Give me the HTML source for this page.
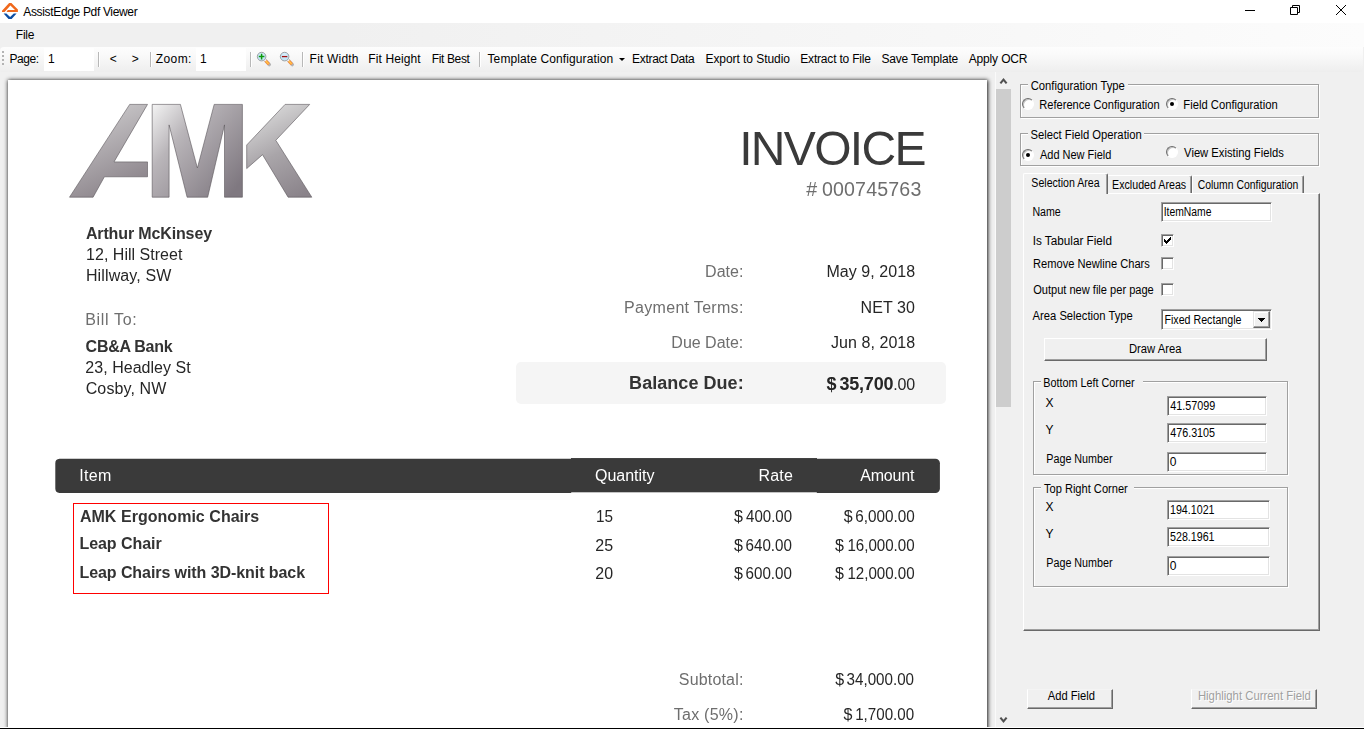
<!DOCTYPE html>
<html>
<head>
<meta charset="utf-8">
<title>AssistEdge Pdf Viewer</title>
<style>
*{box-sizing:border-box;margin:0;padding:0}
html,body{width:1364px;height:729px;overflow:hidden;background:#f0f0f0;font-family:"Liberation Sans",sans-serif;}
.abs{position:absolute;white-space:nowrap}
#win{position:relative;width:1364px;height:729px;overflow:hidden;background:#f0f0f0}
/* ---------- chrome ---------- */
#titlebar{left:0;top:0;width:1364px;height:23px;background:#fff}
#menubar{left:0;top:23px;width:1364px;height:24px;background:linear-gradient(90deg,#f0f0f0 0%,#f0f0f0 25%,#fcfcfc 100%)}
#toolbar{left:0;top:47px;width:1363px;height:25px;background:linear-gradient(180deg,#fdfdfd 0%,#fafafa 30%,#f4f4f4 65%,#eeeeee 100%);border-radius:4px 0 4px 0}
.ui{font-size:12px;line-height:15px;color:#000}
.tb{top:52px}
.sep{width:1px;background:#b8b8b8;top:52px;height:15px}
.tbox{background:#fff;top:48px;height:23px}
/* ---------- pdf page ---------- */
#page{left:8px;top:80px;width:979px;height:660px;background:#fff;box-shadow:0 0 4px 0.5px rgba(0,0,0,.92)}
.inv{color:#262626;font-size:16px;line-height:20px}
.gray{color:#6e6e6e}
/* ---------- right panel ---------- */
.grp{border:1px solid #a0a0a0;box-shadow:1px 1px 0 #fff, inset 1px 1px 0 #fff}
.inp{background:#fff;border:1px solid;border-color:#a0a0a0 #fff #fff #a0a0a0;box-shadow:inset 1px 1px 0 #696969, inset -1px -1px 0 #e3e3e3}
.btn{background:#f0f0f0;border:1px solid;border-color:#fff #696969 #696969 #fff;box-shadow:inset -1px -1px 0 #a0a0a0;font-size:11px;line-height:13px;text-align:center}
.chk{width:13px;height:13px;background:#fff;border:1px solid;border-color:#a0a0a0 #fff #fff #a0a0a0;box-shadow:inset 1px 1px 0 #696969, inset -1px -1px 0 #e3e3e3}
.rad{width:12px;height:12px;border-radius:50%;background:#fff;border:1px solid;border-color:#6c6c6c #fff #fff #6c6c6c;box-shadow:inset 1px 1px 0 rgba(120,120,120,.45)}
.rad.on::after{content:"";position:absolute;left:3px;top:3px;width:4px;height:4px;border-radius:50%;background:#000}
.st{overflow:visible;font-family:"Liberation Sans",sans-serif}
.st text{white-space:pre}
</style>
</head>

<body>
<div id="win">
<div id="titlebar" class="abs"></div>
<svg class="abs" style="left:0;top:0" width="22" height="23" viewBox="0 0 22 23">
  <path d="M2 12 L2 10.7 L9.1 2.9 L11.4 2.9 L17.9 9.6 L17.9 12 L6.5 12 L7.8 10 L15 10 L10.4 5.4 L4.6 12 Z" fill="#f0681c"/>
  <path d="M3.6 13.4 L6.4 13.4 L10.1 16.9 L13.8 13.4 L16.6 13.4 L11.6 19 L8.5 19 Z" fill="#0d4ea3"/>
</svg>
<div id="t1" class="abs ui" style="left:23.31px;top:5px;font-size:12px;line-height:15px;letter-spacing:-0.341px;">AssistEdge Pdf Viewer</div>
<svg class="abs" style="left:1240px;top:0" width="124" height="23" viewBox="0 0 124 23" fill="none" stroke="#000" stroke-width="1">
  <path d="M5 10.5 H15"/>
  <path d="M50.5 7.5 H57.5 V14.5 H50.5 Z"/>
  <path d="M52.5 7.5 V5.5 H59.5 V12.5 H57.5"/>
  <path d="M96 5 L106 15 M106 5 L96 15"/>
</svg>
<div id="menubar" class="abs"></div>
<div id="t2" class="abs ui" style="left:15.75px;top:28px;font-size:12px;line-height:15px;letter-spacing:-0.204px;">File</div>
<div id="toolbar" class="abs"></div>
<div class="abs" style="left:2px;top:51px;width:2px;height:2px;background:#b4b4b4"></div>
<div class="abs" style="left:2px;top:55px;width:2px;height:2px;background:#b4b4b4"></div>
<div class="abs" style="left:2px;top:59px;width:2px;height:2px;background:#b4b4b4"></div>
<div class="abs" style="left:2px;top:63px;width:2px;height:2px;background:#b4b4b4"></div>
<div class="abs tbox" style="left:44px;width:50px"></div>
<div class="abs tbox" style="left:196px;width:50px"></div>
<div id="t3" class="abs ui" style="left:47.90px;top:52px;font-size:12px;line-height:15px;">1</div>
<div id="t4" class="abs ui" style="left:199.90px;top:52px;font-size:12px;line-height:15px;">1</div>
<div class="abs sep" style="left:98px"></div><div class="abs sep" style="left:99px;background:#fff"></div>
<div class="abs sep" style="left:150px"></div><div class="abs sep" style="left:151px;background:#fff"></div>
<div class="abs sep" style="left:250px"></div><div class="abs sep" style="left:251px;background:#fff"></div>
<div class="abs sep" style="left:302px"></div><div class="abs sep" style="left:303px;background:#fff"></div>
<div class="abs sep" style="left:479px"></div><div class="abs sep" style="left:480px;background:#fff"></div>
<div id="t5" class="abs ui" style="left:109.63px;top:52px;font-size:12px;line-height:15px;">&lt;</div>
<div id="t6" class="abs ui" style="left:131.86px;top:52px;font-size:12px;line-height:15px;">&gt;</div>
<div id="t7" class="abs ui" style="left:9.49px;top:52px;font-size:12px;line-height:15px;letter-spacing:-0.421px;">Page:</div>
<div id="t8" class="abs ui" style="left:155.82px;top:52px;font-size:12px;line-height:15px;letter-spacing:0.398px;">Zoom:</div>
<div id="t9" class="abs ui" style="left:309.62px;top:52px;font-size:12px;line-height:15px;letter-spacing:0.195px;">Fit Width</div>
<div id="t10" class="abs ui" style="left:368.31px;top:52px;font-size:12px;line-height:15px;letter-spacing:0.109px;">Fit Height</div>
<div id="t11" class="abs ui" style="left:431.66px;top:52px;font-size:12px;line-height:15px;letter-spacing:-0.352px;">Fit Best</div>
<div id="t12" class="abs ui" style="left:487.50px;top:52px;font-size:12px;line-height:15px;letter-spacing:0.108px;">Template Configuration</div>
<div id="t13" class="abs ui" style="left:632.07px;top:52px;font-size:12px;line-height:15px;letter-spacing:-0.311px;">Extract Data</div>
<div id="t14" class="abs ui" style="left:705.46px;top:52px;font-size:12px;line-height:15px;letter-spacing:-0.059px;">Export to Studio</div>
<div id="t15" class="abs ui" style="left:800.30px;top:52px;font-size:12px;line-height:15px;letter-spacing:-0.190px;">Extract to File</div>
<div id="t16" class="abs ui" style="left:881.38px;top:52px;font-size:12px;line-height:15px;letter-spacing:-0.190px;">Save Template</div>
<div id="t17" class="abs ui" style="left:968.71px;top:52px;font-size:12px;line-height:15px;letter-spacing:-0.150px;">Apply OCR</div>
<div class="abs" style="left:619px;top:58px;width:0;height:0;border-left:3px solid transparent;border-right:3px solid transparent;border-top:3px solid #000"></div>
<svg class="abs" style="left:256px;top:51px" width="16" height="16" viewBox="0 0 16 16">
  <path d="M9.4 9.4 L13.3 13.6" stroke="#b4b4b4" stroke-width="3.4" stroke-linecap="round"/>
  <path d="M9.6 9.7 L12.9 13.2" stroke="#ff8c38" stroke-width="2.8"/>
  <path d="M10 10.2 L12.6 12.9" stroke="#ffd24a" stroke-width="1.1"/>
  <path d="M8.3 8.3 L9.8 9.9" stroke="#f4f4f4" stroke-width="2"/>
  <circle cx="5.6" cy="5.6" r="4.3" fill="#c2e5f8" stroke="#9a9a9a" stroke-width="0.9"/>
  <circle cx="5.6" cy="4.6" r="2.6" fill="#dff2fc" opacity=".6"/>
  <path d="M5.6 2.8 V8.4 M2.8 5.6 H8.4" stroke="#0c9a0c" stroke-width="1.5"/>
</svg>
<svg class="abs" style="left:279px;top:51px" width="16" height="16" viewBox="0 0 16 16">
  <path d="M9.4 9.4 L13.3 13.6" stroke="#b4b4b4" stroke-width="3.4" stroke-linecap="round"/>
  <path d="M9.6 9.7 L12.9 13.2" stroke="#ff8c38" stroke-width="2.8"/>
  <path d="M10 10.2 L12.6 12.9" stroke="#ffd24a" stroke-width="1.1"/>
  <path d="M8.3 8.3 L9.8 9.9" stroke="#f4f4f4" stroke-width="2"/>
  <circle cx="5.6" cy="5.6" r="4.3" fill="#c2e5f8" stroke="#9a9a9a" stroke-width="0.9"/>
  <circle cx="5.6" cy="4.6" r="2.6" fill="#dff2fc" opacity=".6"/>
  <path d="M2.9 5.6 H8.3" stroke="#a01010" stroke-width="1.3"/>
</svg>
<div id="page" class="abs"></div>
<svg class="abs" style="left:66px;top:100px" width="250" height="102" viewBox="66 100 250 102">
 <defs>
  <linearGradient id="gA" gradientUnits="userSpaceOnUse" x1="110" y1="104" x2="150" y2="190"><stop offset="0" stop-color="#c9c7c9"/><stop offset="1" stop-color="#857d84"/></linearGradient>
  <linearGradient id="gM" gradientUnits="userSpaceOnUse" x1="152" y1="104" x2="243" y2="180"><stop offset="0" stop-color="#f4f4f4"/><stop offset=".35" stop-color="#b9b5b9"/><stop offset="1" stop-color="#7f7880"/></linearGradient>
  <linearGradient id="gK" gradientUnits="userSpaceOnUse" x1="255" y1="110" x2="300" y2="197"><stop offset="0" stop-color="#dcdcdc"/><stop offset=".5" stop-color="#a9a5a9"/><stop offset="1" stop-color="#8a838a"/></linearGradient>
 </defs>
 <g stroke="#5a565a" stroke-width="0.6" stroke-linejoin="miter">
  <path d="M69.5 197.2 L129.7 104.4 L147.5 104.4 L114 161.9 L147.5 161.9 L147.5 176.8 L104.4 176.8 L93.1 197.2 Z" fill="url(#gA)"/>
  <path d="M152.2 104.4 L180.4 104.4 L197.4 168 L214.2 104.4 L242.4 104.4 L242.4 197.2 L224.5 197.2 L224.5 124.9 L207.7 197.2 L187.1 197.2 L169.1 124.9 L169.1 197.2 L152.2 197.2 Z" fill="url(#gM)"/>
  <path d="M285.1 104.4 L309.7 104.4 L275.8 140.3 L311.8 197.2 L288.1 197.2 L262.5 154.7 L246.7 168.6 L246.7 145 Z" fill="url(#gK)"/>
 </g>
</svg>
<div id="pdf" class="abs" style="left:0;top:0;width:990px;height:729px;will-change:transform">
<div id="t18" class="abs inv" style="left:85.90px;top:224px;font-size:16px;line-height:20px;letter-spacing:-0.134px;font-weight:bold;color:#333;">Arthur McKinsey</div>
<div id="t19" class="abs inv" style="left:86.07px;top:245px;font-size:16px;line-height:20px;letter-spacing:0.020px;">12, Hill Street</div>
<div id="t20" class="abs inv" style="left:85.88px;top:266px;font-size:16px;line-height:20px;letter-spacing:0.136px;">Hillway, SW</div>
<div id="t21" class="abs inv gray" style="left:85.24px;top:310px;font-size:16px;line-height:20px;letter-spacing:0.661px;">Bill To:</div>
<div id="t22" class="abs inv" style="left:85.61px;top:337px;font-size:16px;line-height:20px;letter-spacing:-0.269px;font-weight:bold;color:#333;">CB&amp;A Bank</div>
<div id="t23" class="abs inv" style="left:85.33px;top:358px;font-size:16px;line-height:20px;letter-spacing:0.030px;">23, Headley St</div>
<div id="t24" class="abs inv" style="left:85.69px;top:379px;font-size:16px;line-height:20px;letter-spacing:0.125px;">Cosby, NW</div>
<div id="t25" class="abs inv" style="left:739.14px;top:119px;font-size:48px;line-height:60px;letter-spacing:-1.652px;color:#3a3a3a;">INVOICE</div>
<div id="t26" class="abs inv gray" style="left:806.13px;top:177px;font-size:19.6px;line-height:24px;">#</div>
<div id="t27" class="abs inv gray" style="left:821.88px;top:177px;font-size:19.6px;line-height:24px;letter-spacing:0.172px;">000745763</div>
<div id="t28" class="abs inv gray" style="left:705.09px;top:262px;font-size:16px;line-height:20px;letter-spacing:0.004px;">Date:</div>
<div id="t29" class="abs inv" style="left:826.39px;top:262px;font-size:16px;line-height:20px;letter-spacing:0.068px;">May 9, 2018</div>
<div id="t30" class="abs inv gray" style="left:624.09px;top:298px;font-size:16px;line-height:20px;letter-spacing:0.306px;">Payment Terms:</div>
<div id="t31" class="abs inv" style="left:860.55px;top:298px;font-size:16px;line-height:20px;letter-spacing:0.094px;">NET 30</div>
<div id="t32" class="abs inv gray" style="left:671.37px;top:333px;font-size:16px;line-height:20px;letter-spacing:-0.014px;">Due Date:</div>
<div id="t33" class="abs inv" style="left:831.00px;top:333px;font-size:16px;line-height:20px;letter-spacing:0.056px;">Jun 8, 2018</div>
<div class="abs" style="left:516px;top:362px;width:430px;height:42px;background:#f5f5f5;border-radius:5px"></div>
<div id="t34" class="abs inv" style="left:629.11px;top:372px;font-size:18px;line-height:22px;letter-spacing:0.047px;font-weight:bold;color:#333;">Balance Due:</div>
<div id="t35" class="abs inv" style="left:826.59px;top:374px;font-size:16px;line-height:20px;letter-spacing:-0.199px;"><span style="font-weight:bold;font-size:18px">$<span style="margin-left:3px">35,700</span></span>.00</div>
<svg class="abs" style="left:55px;top:457px" width="886" height="38" viewBox="0 0 886 38">
  <path d="M4.5 1.75 H516.2 V36.1 H4.5 A4.5 4.5 0 0 1 0.3 31.6 V6.25 A4.5 4.5 0 0 1 4.5 1.75 Z" fill="#3a3a3a"/>
  <rect x="516" y="1.05" width="246" height="34.25" fill="#3a3a3a"/>
  <path d="M761.8 1.75 H880.4 A4.5 4.5 0 0 1 884.9 6.25 V31.6 A4.5 4.5 0 0 1 880.4 36.1 H761.8 Z" fill="#3a3a3a"/>
</svg>
<div id="t36" class="abs inv" style="left:79.23px;top:466px;font-size:16px;line-height:20px;letter-spacing:0.348px;color:#fff;">Item</div>
<div id="t37" class="abs inv" style="left:594.96px;top:466px;font-size:16px;line-height:20px;letter-spacing:-0.022px;color:#fff;">Quantity</div>
<div id="t38" class="abs inv" style="left:758.47px;top:466px;font-size:16px;line-height:20px;letter-spacing:0.179px;color:#fff;">Rate</div>
<div id="t39" class="abs inv" style="left:860.24px;top:466px;font-size:16px;line-height:20px;letter-spacing:-0.193px;color:#fff;">Amount</div>
<div id="t40" class="abs inv" style="left:79.90px;top:507px;font-size:16px;line-height:20px;letter-spacing:0.036px;font-weight:bold;color:#333;">AMK Ergonomic Chairs</div>
<div id="t41" class="abs inv" style="left:79.46px;top:534px;font-size:16px;line-height:20px;letter-spacing:-0.050px;font-weight:bold;color:#333;">Leap Chair</div>
<div id="t42" class="abs inv" style="left:79.46px;top:563px;font-size:16px;line-height:20px;letter-spacing:-0.072px;font-weight:bold;color:#333;">Leap Chairs with 3D-knit back</div>
<div class="abs" style="left:73px;top:503px;width:256px;height:91px;border:1px solid #f00"></div>
<svg class="abs st" style="left:596px;top:507px" width="2" height="14"><text id="t43" x="0.12" y="15" textLength="17.01" lengthAdjust="spacingAndGlyphs" font-size="16.1" fill="#262626">15</text></svg>
<svg class="abs st" style="left:734px;top:507px" width="2" height="14"><text id="t44" x="0.0" y="15" font-size="16" fill="#262626">$</text></svg>
<svg class="abs st" style="left:746px;top:507px" width="2" height="14"><text id="t45" x="0.07" y="15" textLength="45.96" lengthAdjust="spacingAndGlyphs" font-size="16.1" fill="#262626">400.00</text></svg>
<svg class="abs st" style="left:843px;top:507px" width="2" height="14"><text id="t46" x="0.7" y="15" font-size="16" fill="#262626">$</text></svg>
<svg class="abs st" style="left:855px;top:507px" width="2" height="14"><text id="t47" x="0.16" y="15" textLength="59.55" lengthAdjust="spacingAndGlyphs" font-size="16.1" fill="#262626">6,000.00</text></svg>
<svg class="abs st" style="left:595px;top:536px" width="2" height="14"><text id="t48" x="0.32" y="15" textLength="17.83" lengthAdjust="spacingAndGlyphs" font-size="16.1" fill="#262626">25</text></svg>
<svg class="abs st" style="left:734px;top:536px" width="2" height="14"><text id="t49" x="0.0" y="15" font-size="16" fill="#262626">$</text></svg>
<svg class="abs st" style="left:745px;top:536px" width="2" height="14"><text id="t50" x="0.59" y="15" textLength="46.35" lengthAdjust="spacingAndGlyphs" font-size="16.1" fill="#262626">640.00</text></svg>
<svg class="abs st" style="left:835px;top:536px" width="2" height="14"><text id="t51" x="0.1" y="15" font-size="16" fill="#262626">$</text></svg>
<svg class="abs st" style="left:847px;top:536px" width="2" height="14"><text id="t52" x="0.38" y="15" textLength="67.24" lengthAdjust="spacingAndGlyphs" font-size="16.1" fill="#262626">16,000.00</text></svg>
<svg class="abs st" style="left:595px;top:564px" width="2" height="14"><text id="t53" x="0.32" y="15" textLength="17.71" lengthAdjust="spacingAndGlyphs" font-size="16.1" fill="#262626">20</text></svg>
<svg class="abs st" style="left:734px;top:564px" width="2" height="14"><text id="t54" x="0.0" y="15" font-size="16" fill="#262626">$</text></svg>
<svg class="abs st" style="left:745px;top:564px" width="2" height="14"><text id="t55" x="0.59" y="15" textLength="46.35" lengthAdjust="spacingAndGlyphs" font-size="16.1" fill="#262626">600.00</text></svg>
<svg class="abs st" style="left:835px;top:564px" width="2" height="14"><text id="t56" x="0.1" y="15" font-size="16" fill="#262626">$</text></svg>
<svg class="abs st" style="left:847px;top:564px" width="2" height="14"><text id="t57" x="0.38" y="15" textLength="67.24" lengthAdjust="spacingAndGlyphs" font-size="16.1" fill="#262626">12,000.00</text></svg>
<div id="t58" class="abs inv gray" style="left:678.79px;top:670px;font-size:16px;line-height:20px;letter-spacing:0.175px;">Subtotal:</div>
<svg class="abs st" style="left:835px;top:670px" width="2" height="14"><text id="t59" x="0.2" y="15" font-size="16" fill="#262626">$</text></svg>
<svg class="abs st" style="left:846px;top:670px" width="2" height="14"><text id="t60" x="0.55" y="15" textLength="67.50" lengthAdjust="spacingAndGlyphs" font-size="16.1" fill="#262626">34,000.00</text></svg>
<div id="t61" class="abs inv gray" style="left:673.76px;top:705px;font-size:16px;line-height:20px;letter-spacing:0.250px;">Tax (5%):</div>
<svg class="abs st" style="left:843px;top:705px" width="2" height="14"><text id="t62" x="0.5" y="15" font-size="16" fill="#262626">$</text></svg>
<svg class="abs st" style="left:855px;top:705px" width="2" height="14"><text id="t63" x="0.16" y="15" textLength="58.99" lengthAdjust="spacingAndGlyphs" font-size="16.1" fill="#262626">1,700.00</text></svg>
</div>
<div class="abs" style="left:995px;top:72px;width:1px;height:657px;background:#fafafa"></div>
<div class="abs" style="left:996px;top:89px;width:15px;height:318px;background:#cdcdcd"></div>
<svg class="abs" style="left:996px;top:74px" width="15" height="14" viewBox="0 0 15 14"><path d="M4.4 9.3 L7.5 5.6 L10.6 9.3" fill="none" stroke="#505050" stroke-width="2.1" stroke-linejoin="miter"/></svg>
<svg class="abs" style="left:996px;top:712px" width="15" height="14" viewBox="0 0 15 14"><path d="M4.4 5.7 L7.5 9.4 L10.6 5.7" fill="none" stroke="#505050" stroke-width="2.1" stroke-linejoin="miter"/></svg>
<div class="abs grp" style="left:1020px;top:84px;width:299px;height:34px"></div>
<div class="abs" style="left:1028px;top:80px;width:100px;height:8px;background:#f0f0f0"></div>
<svg class="abs st" style="left:1030px;top:80px" width="2" height="14"><text id="t64" x="0.65" y="10" textLength="94.22" lengthAdjust="spacingAndGlyphs" font-size="12" fill="#000">Configuration Type</text></svg>
<div class="abs rad" style="left:1022px;top:98px"></div>
<svg class="abs st" style="left:1039px;top:99px" width="2" height="14"><text id="t65" x="0.31" y="10" textLength="120.25" lengthAdjust="spacingAndGlyphs" font-size="12" fill="#000">Reference Configuration</text></svg>
<div class="abs rad on" style="left:1166px;top:98px"></div>
<svg class="abs st" style="left:1183px;top:99px" width="2" height="14"><text id="t66" x="0.36" y="10" textLength="94.31" lengthAdjust="spacingAndGlyphs" font-size="12" fill="#000">Field Configuration</text></svg>
<div class="abs grp" style="left:1020px;top:133px;width:299px;height:33px"></div>
<div class="abs" style="left:1028px;top:129px;width:116px;height:8px;background:#f0f0f0"></div>
<svg class="abs st" style="left:1030px;top:129px" width="2" height="14"><text id="t67" x="0.46" y="10" textLength="111.32" lengthAdjust="spacingAndGlyphs" font-size="12" fill="#000">Select Field Operation</text></svg>
<div class="abs rad on" style="left:1022px;top:149px"></div>
<svg class="abs st" style="left:1040px;top:149px" width="2" height="14"><text id="t68" x="0.0" y="10" textLength="71.41" lengthAdjust="spacingAndGlyphs" font-size="12" fill="#000">Add New Field</text></svg>
<div class="abs rad" style="left:1166px;top:146px"></div>
<svg class="abs st" style="left:1184px;top:147px" width="2" height="14"><text id="t69" x="0.1" y="10" textLength="99.66" lengthAdjust="spacingAndGlyphs" font-size="12" fill="#000">View Existing Fields</text></svg>
<div class="abs" style="left:1023px;top:193px;width:297px;height:438px;border:1px solid;border-color:#fff #696969 #696969 #fff;box-shadow:inset -1px -1px 0 #a0a0a0"></div>
<div class="abs" style="left:1107px;top:175px;width:85px;height:18px;border:1px solid;border-color:#fff #696969 transparent #fff;border-bottom:none;box-shadow:inset -1px 0 0 #a0a0a0;border-radius:2px 2px 0 0"></div>
<div class="abs" style="left:1192px;top:175px;width:112px;height:18px;border:1px solid;border-color:#fff #696969 transparent #fff;border-bottom:none;box-shadow:inset -1px 0 0 #a0a0a0;border-radius:2px 2px 0 0"></div>
<div class="abs" style="left:1023px;top:173px;width:85px;height:21px;background:#f0f0f0;border:1px solid;border-color:#fff #696969 transparent #fff;border-bottom:none;box-shadow:inset -1px 0 0 #a0a0a0;border-radius:2px 2px 0 0"></div>
<svg class="abs st" style="left:1031px;top:177px" width="2" height="14"><text id="t70" x="0.34" y="10" textLength="68.30" lengthAdjust="spacingAndGlyphs" font-size="12" fill="#000">Selection Area</text></svg>
<svg class="abs st" style="left:1112px;top:179px" width="2" height="14"><text id="t71" x="0.12" y="10" textLength="74.03" lengthAdjust="spacingAndGlyphs" font-size="12" fill="#000">Excluded Areas</text></svg>
<svg class="abs st" style="left:1197px;top:179px" width="2" height="14"><text id="t72" x="0.7" y="10" textLength="100.70" lengthAdjust="spacingAndGlyphs" font-size="12" fill="#000">Column Configuration</text></svg>
<svg class="abs st" style="left:1032px;top:206px" width="2" height="14"><text id="t73" x="0.44" y="10" textLength="28.32" lengthAdjust="spacingAndGlyphs" font-size="12" fill="#000">Name</text></svg>
<div class="abs inp" style="left:1161px;top:202px;width:111px;height:20px"></div>
<svg class="abs st" style="left:1163px;top:206px" width="2" height="14"><text id="t74" x="0.73" y="10" textLength="47.75" lengthAdjust="spacingAndGlyphs" font-size="12" fill="#000">ItemName</text></svg>
<svg class="abs st" style="left:1032px;top:235px" width="2" height="14"><text id="t75" x="0.69" y="10" textLength="79.31" lengthAdjust="spacingAndGlyphs" font-size="12" fill="#000">Is Tabular Field</text></svg>
<div class="abs chk" style="left:1161px;top:234px"></div>
<div class="abs" style="left:1164px;top:239px;width:1px;height:3px;background:#000"></div>
<div class="abs" style="left:1165px;top:240px;width:1px;height:3px;background:#000"></div>
<div class="abs" style="left:1166px;top:241px;width:1px;height:3px;background:#000"></div>
<div class="abs" style="left:1167px;top:240px;width:1px;height:3px;background:#000"></div>
<div class="abs" style="left:1168px;top:239px;width:1px;height:3px;background:#000"></div>
<div class="abs" style="left:1169px;top:238px;width:1px;height:3px;background:#000"></div>
<div class="abs" style="left:1170px;top:237px;width:1px;height:3px;background:#000"></div>
<svg class="abs st" style="left:1032px;top:258px" width="2" height="14"><text id="t76" x="0.98" y="10" textLength="116.89" lengthAdjust="spacingAndGlyphs" font-size="12" fill="#000">Remove Newline Chars</text></svg>
<div class="abs chk" style="left:1161px;top:257px"></div>
<svg class="abs st" style="left:1033px;top:284px" width="2" height="14"><text id="t77" x="0.13" y="10" textLength="120.66" lengthAdjust="spacingAndGlyphs" font-size="12" fill="#000">Output new file per page</text></svg>
<div class="abs chk" style="left:1161px;top:283px"></div>
<svg class="abs st" style="left:1032px;top:310px" width="2" height="14"><text id="t78" x="0.54" y="10" textLength="100.33" lengthAdjust="spacingAndGlyphs" font-size="12" fill="#000">Area Selection Type</text></svg>
<div class="abs inp" style="left:1161px;top:309px;width:111px;height:21px"></div>
<svg class="abs st" style="left:1164px;top:314px" width="2" height="14"><text id="t79" x="0.49" y="10" textLength="77.00" lengthAdjust="spacingAndGlyphs" font-size="12" fill="#000">Fixed Rectangle</text></svg>
<div class="abs btn" style="left:1253px;top:311px;width:17px;height:17px;border-color:#e3e3e3 #696969 #696969 #e3e3e3;box-shadow:inset -1px -1px 0 #a0a0a0, inset 1px 1px 0 #fff"></div>
<div class="abs" style="left:1258px;top:318px;width:7px;height:1px;background:#000"></div>
<div class="abs" style="left:1259px;top:319px;width:5px;height:1px;background:#000"></div>
<div class="abs" style="left:1260px;top:320px;width:3px;height:1px;background:#000"></div>
<div class="abs" style="left:1261px;top:321px;width:1px;height:1px;background:#000"></div>
<div class="abs btn" style="left:1044px;top:338px;width:223px;height:23px"></div>
<svg class="abs st" style="left:1129px;top:343px" width="2" height="14"><text id="t80" x="0.01" y="10" textLength="52.45" lengthAdjust="spacingAndGlyphs" font-size="12" fill="#000">Draw Area</text></svg>
<div class="abs grp" style="left:1033px;top:381px;width:255px;height:94px"></div>
<div class="abs" style="left:1041px;top:377px;width:102px;height:8px;background:#f0f0f0"></div>
<svg class="abs st" style="left:1043px;top:377px" width="2" height="14"><text id="t81" x="0.27" y="10" textLength="91.32" lengthAdjust="spacingAndGlyphs" font-size="12" fill="#000">Bottom Left Corner</text></svg>
<svg class="abs st" style="left:1045px;top:397px" width="2" height="14"><text id="t82" x="0.4" y="10" font-size="12" fill="#000">X</text></svg>
<div class="abs inp" style="left:1167px;top:396px;width:100px;height:20px"></div>
<svg class="abs st" style="left:1170px;top:400px" width="2" height="14"><text id="t83" x="0.23" y="10" textLength="44.94" lengthAdjust="spacingAndGlyphs" font-size="12" fill="#000">41.57099</text></svg>
<svg class="abs st" style="left:1045px;top:424px" width="2" height="14"><text id="t84" x="0.4" y="10" font-size="12" fill="#000">Y</text></svg>
<div class="abs inp" style="left:1167px;top:423px;width:100px;height:20px"></div>
<svg class="abs st" style="left:1170px;top:427px" width="2" height="14"><text id="t85" x="0.24" y="10" textLength="44.81" lengthAdjust="spacingAndGlyphs" font-size="12" fill="#000">476.3105</text></svg>
<svg class="abs st" style="left:1046px;top:453px" width="2" height="14"><text id="t86" x="0.24" y="10" textLength="66.39" lengthAdjust="spacingAndGlyphs" font-size="12" fill="#000">Page Number</text></svg>
<div class="abs inp" style="left:1167px;top:452px;width:100px;height:20px"></div>
<svg class="abs st" style="left:1169px;top:456px" width="2" height="14"><text id="t87" x="0.8" y="10" font-size="12" fill="#000">0</text></svg>
<div class="abs grp" style="left:1033px;top:487px;width:255px;height:100px"></div>
<div class="abs" style="left:1041px;top:483px;width:93px;height:8px;background:#f0f0f0"></div>
<svg class="abs st" style="left:1043px;top:483px" width="2" height="14"><text id="t88" x="0.92" y="10" textLength="83.89" lengthAdjust="spacingAndGlyphs" font-size="12" fill="#000">Top Right Corner</text></svg>
<svg class="abs st" style="left:1045px;top:501px" width="2" height="14"><text id="t89" x="0.4" y="10" font-size="12" fill="#000">X</text></svg>
<div class="abs inp" style="left:1167px;top:500px;width:103px;height:20px"></div>
<svg class="abs st" style="left:1169px;top:504px" width="2" height="14"><text id="t90" x="0.95" y="10" textLength="44.64" lengthAdjust="spacingAndGlyphs" font-size="12" fill="#000">194.1021</text></svg>
<svg class="abs st" style="left:1045px;top:528px" width="2" height="14"><text id="t91" x="0.4" y="10" font-size="12" fill="#000">Y</text></svg>
<div class="abs inp" style="left:1167px;top:527px;width:103px;height:20px"></div>
<svg class="abs st" style="left:1170px;top:531px" width="2" height="14"><text id="t92" x="0.02" y="10" textLength="44.53" lengthAdjust="spacingAndGlyphs" font-size="12" fill="#000">528.1961</text></svg>
<svg class="abs st" style="left:1046px;top:557px" width="2" height="14"><text id="t93" x="0.24" y="10" textLength="66.39" lengthAdjust="spacingAndGlyphs" font-size="12" fill="#000">Page Number</text></svg>
<div class="abs inp" style="left:1167px;top:556px;width:103px;height:20px"></div>
<svg class="abs st" style="left:1169px;top:560px" width="2" height="14"><text id="t94" x="0.8" y="10" font-size="12" fill="#000">0</text></svg>
<div class="abs btn" style="left:1027px;top:689px;width:86px;height:20px;border-top-color:#f4f4f4"></div>
<svg class="abs st" style="left:1047px;top:690px" width="2" height="14"><text id="t95" x="0.73" y="10" textLength="47.18" lengthAdjust="spacingAndGlyphs" font-size="12" fill="#000">Add Field</text></svg>
<div class="abs btn" style="left:1191px;top:689px;width:126px;height:20px;border-top-color:#f4f4f4"></div>
<svg class="abs st" style="left:1197px;top:690px" width="2" height="14"><text x="1.9" y="11" textLength="112.91" lengthAdjust="spacingAndGlyphs" font-size="12" fill="#fff">Highlight Current Field</text><text id="t96" x="0.9" y="10" textLength="112.91" lengthAdjust="spacingAndGlyphs" font-size="12" fill="#a0a0a0">Highlight Current Field</text></svg>
<div class="abs" style="left:0;top:727px;width:1364px;height:1px;background:#fff"></div>
<div class="abs" style="left:0;top:728px;width:1364px;height:1px;background:#000"></div>
</div>
</body>
</html>
